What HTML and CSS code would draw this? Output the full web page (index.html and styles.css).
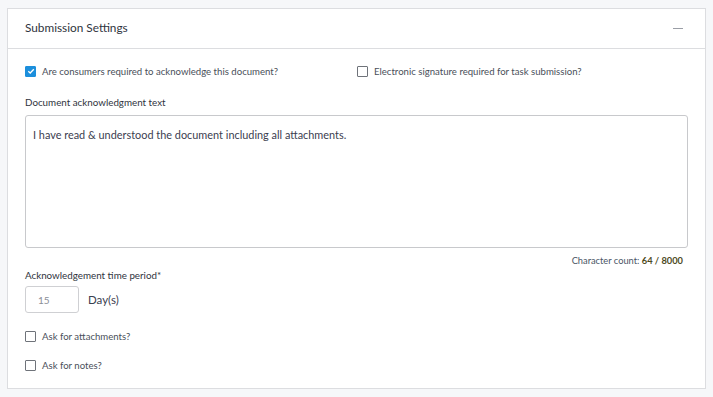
FILE: index.html
```html
<!DOCTYPE html>
<html lang="en">
<head>
    <meta charset="UTF-8">
    <meta name="viewport" content="width=device-width, initial-scale=1.0">
    <title>Submission Settings</title>
    <link rel="stylesheet" href="styles.css">
</head>
<body>
    <div class="card">
        <div class="card-head">
            <span class="card-title">Submission Settings</span>
            <span class="collapse"></span>
        </div>
        <div class="card-body">
            <div class="check-row">
                <label class="check"><span class="box checked"><svg width="8" height="8" viewBox="0 0 8 8"><path d="M1.3 4.3 L3.2 6 L6.8 2.2" fill="none" stroke="#fff" stroke-width="1.3"/></svg></span>Are consumers required to acknowledge this document?</label>
                <label class="check"><span class="box"></span>Electronic signature required for task submission?</label>
            </div>

            <div class="field-label">Document acknowledgment text</div>
            <div class="textarea">I have read &amp; understood the document including all attachments.</div>
            <div class="char-count">Character count: <b>64 / 8000</b></div>

            <div class="field-label period">Acknowledgement time period*</div>
            <div class="period-row">
                <div class="num-input">15</div>
                <span class="days">Day(s)</span>
            </div>

            <label class="check single"><span class="box"></span>Ask for attachments?</label>
            <label class="check single"><span class="box"></span>Ask for notes?</label>
        </div>
    </div>
</body>
</html>
```

FILE: styles.css
```css
body {
    margin: 0;
    padding: 8px 7px 8px 7px;
    background-color: #f6f7f9;
    font-family: "Lato", "Open Sans", sans-serif;
    color: #3a3f4a;
}

.card {
    width: 697px;
    background-color: #fff;
    border: 1px solid #dcdde0;
}

.card-head {
    height: 39px;
    border-bottom: 1px solid #dcdde0;
    display: flex;
    align-items: center;
    justify-content: space-between;
    padding: 0 22px 0 17px;
}

.card-title {
    font-size: 11.8px;
    color: #2f3440;
    margin-top: -2px;
}

.collapse {
    width: 10px;
    height: 1px;
    background-color: #9a9ea6;
}

.card-body {
    padding: 15px 17px 16px 17px;
}

.check-row {
    display: flex;
    height: 14px;
    align-items: center;
}

.check {
    display: flex;
    align-items: center;
    font-size: 9.6px;
    color: #4a4f5a;
}

.check-row .check:first-child {
    width: 332px;
}

.box {
    width: 9px;
    height: 9px;
    border: 1px solid #6f737a;
    border-radius: 1px;
    margin-right: 6px;
    display: flex;
    align-items: center;
    justify-content: center;
}

.box.checked {
    background-color: #1c8fdc;
    border-color: #1c8fdc;
}

.field-label {
    font-size: 9.8px;
    color: #2f3440;
    margin-top: 18px;
}

.textarea {
    margin-top: 7px;
    height: 119px;
    border: 1px solid #c8c9cc;
    border-radius: 3px;
    padding: 12px 7px 0 7px;
    font-size: 10.9px;
    color: #3b4050;
}

.char-count {
    text-align: right;
    font-size: 9.3px;
    color: #4a5565;
    margin-top: 7px;
    padding-right: 5px;
}

.char-count b {
    color: #4d4a1e;
}

.field-label.period {
    margin-top: 3px;
}

.period-row {
    display: flex;
    align-items: center;
    margin-top: 5px;
}

.num-input {
    width: 40px;
    height: 25px;
    border: 1px solid #cfd0d3;
    border-radius: 3px;
    padding-left: 12px;
    font-size: 10px;
    color: #8a8e96;
    display: flex;
    align-items: center;
}

.days {
    margin-left: 9px;
    font-size: 11.5px;
    color: #3b4050;
}

.check.single {
    margin-top: 16px;
    height: 14px;
}

.check.single + .check.single {
    margin-top: 15px;
}
```
